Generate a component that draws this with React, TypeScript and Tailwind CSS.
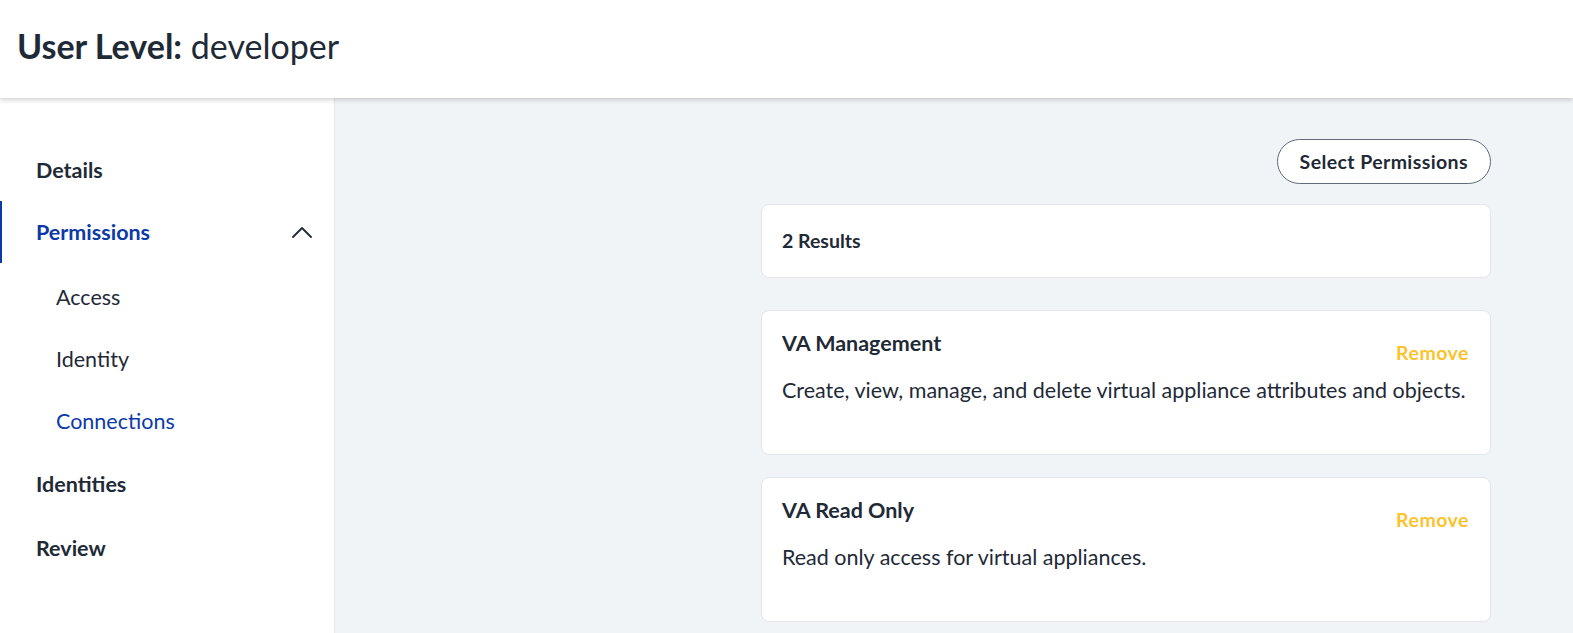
const navTop = "flex h-[64px] items-center pl-9 pr-5 text-[21.5px] font-bold text-[#1f2a37]";
const navSub = "flex h-[62px] items-center pl-14 text-[21.5px]";

function Permission({ title, description }: { title: string; description: string }) {
    return (
        <div className="h-[145px] rounded-lg border border-[#e3e6ea] bg-white pl-5 pr-[21px] pt-[18px]">
            <div className="flex items-start justify-between">
                <h3 className="text-[21.5px] font-bold leading-[28px] text-[#1f2a37]">{title}</h3>
                <button className="mt-[9px] text-[19.5px] font-bold tracking-[0.5px] text-[#fbc32c]">Remove</button>
            </div>
            <p className="mt-[9px] text-[21.5px] leading-[28px] text-[#1f2a37]">{description}</p>
        </div>
    );
}

export default function App() {
    return (
        <div className="flex h-[633px] flex-col overflow-hidden bg-[#f1f4f7] font-['Lato','Noto_Sans',sans-serif]">
            <header className="relative z-10 flex h-[98px] shrink-0 items-center bg-white pl-[17px] shadow-[0_2px_5px_rgba(0,0,0,0.18)]">
                <h1 className="pb-[8px] text-[34px] text-[#1f2a37]">
                    <span className="font-bold">User Level:</span> developer
                </h1>
            </header>

            <div className="flex flex-1">
                <nav className="w-[335px] shrink-0 border-r border-[#e5e7eb] bg-white pt-[42px]">
                    <div className="flex h-[61px] items-center pl-9 text-[21.5px] font-bold text-[#1f2a37]">Details</div>
                    <div className="flex h-[62px] items-center justify-between border-l-2 border-[#0b3aa8] pl-[34px] pr-[22px] text-[21.5px] font-bold text-[#0b3aa8]">
                        <span>Permissions</span>
                        <svg width="20" height="12" viewBox="0 0 20 12" fill="none" stroke="#1f2a37" strokeWidth="1.8" strokeLinecap="round" strokeLinejoin="round">
                            <polyline points="1,11 10,2 19,11" />
                        </svg>
                    </div>
                    <div className="pt-[3px]">
                        <div className={navSub + " text-[#1f2a37]"}>Access</div>
                        <div className={navSub + " text-[#1f2a37]"}>Identity</div>
                        <div className={navSub + " text-[#0b3aa8]"}>Connections</div>
                    </div>
                    <div className={navTop}>Identities</div>
                    <div className={navTop}>Review</div>
                </nav>

                <main className="flex flex-1 justify-end pr-[82px] pt-[41px]">
                    <div className="flex w-[730px] flex-col">
                        <div className="flex justify-end">
                            <button className="h-[45px] rounded-full border border-[#5f6b7a] bg-white px-[22px] text-[19.5px] font-bold tracking-[0.4px] text-[#1f2a37]">
                                Select Permissions
                            </button>
                        </div>
                        <div className="mt-[20px] flex h-[74px] items-center rounded-lg border border-[#e3e6ea] bg-white pl-5">
                            <span className="text-[19.5px] font-bold text-[#1f2a37]">2 Results</span>
                        </div>
                        <div className="mt-[32px] flex flex-col gap-[22px]">
                            <Permission
                                title="VA Management"
                                description="Create, view, manage, and delete virtual appliance attributes and objects."
                            />
                            <Permission title="VA Read Only" description="Read only access for virtual appliances." />
                        </div>
                    </div>
                </main>
            </div>
        </div>
    );
}
